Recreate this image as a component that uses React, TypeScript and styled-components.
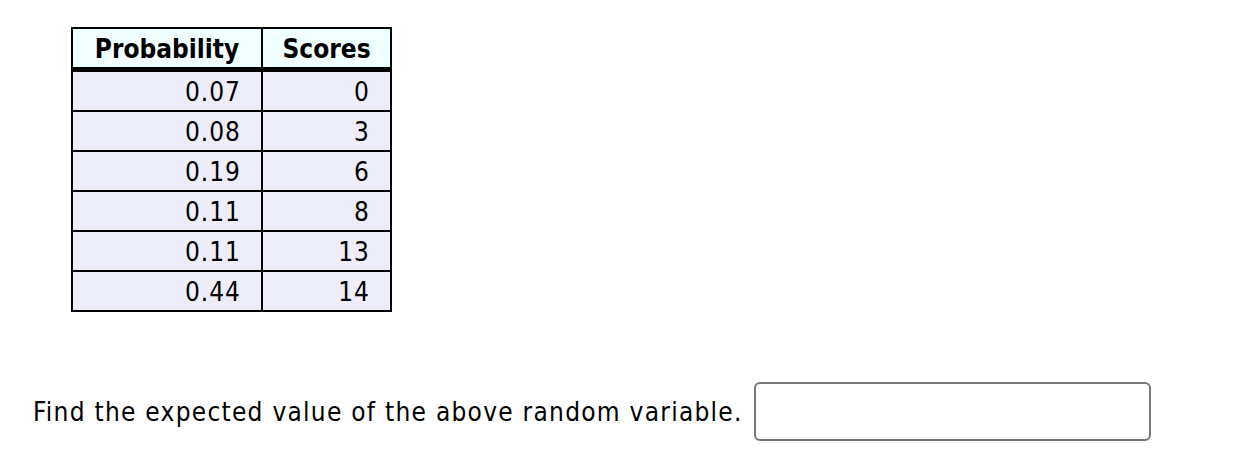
import React from "react";
import styled, { createGlobalStyle } from "styled-components";

interface Row {
  probability: string;
  score: number;
}

const rows: Row[] = [
  { probability: "0.07", score: 0 },
  { probability: "0.08", score: 3 },
  { probability: "0.19", score: 6 },
  { probability: "0.11", score: 8 },
  { probability: "0.11", score: 13 },
  { probability: "0.44", score: 14 },
];

const App: React.FC = () => {
  return (
    <>
      <GlobalStyle />
      <Page>
        <Table>
          <thead>
            <tr>
              <HeadCell $width={188}>Probability</HeadCell>
              <HeadCell $width={127}>Scores</HeadCell>
            </tr>
          </thead>
          <tbody>
            {rows.map((row, i) => (
              <tr key={i}>
                <Cell>{row.probability}</Cell>
                <Cell>{row.score}</Cell>
              </tr>
            ))}
          </tbody>
        </Table>
        <Question>
          <Prompt>Find the expected value of the above random variable.</Prompt>
          <Answer type="text" aria-label="expected value" />
        </Question>
      </Page>
    </>
  );
};

const GlobalStyle = createGlobalStyle`
  body {
    margin: 0;
    background: #fff;
    font-family: "DejaVu Sans Condensed", "DejaVu Sans", "Liberation Sans", sans-serif;
    font-stretch: condensed;
    color: #000;
  }
`;

const Page = styled.div`
  display: flex;
  flex-direction: column;
  align-items: flex-start;
  padding: 27px 0 0 33px;
`;

const Table = styled.table`
  margin-left: 38px;
  border-collapse: collapse;
  border: 2px solid #000;
  font-size: 26px;
`;

const HeadCell = styled.th<{ $width: number }>`
  width: ${(p) => p.$width}px;
  height: 37px;
  padding: 1px 0 0;
  background: #f0ffff;
  border: 2px solid #000;
  border-bottom: 5px solid #000;
  font-weight: bold;
  text-align: center;
  white-space: nowrap;
`;

const Cell = styled.td`
  height: 35px;
  padding: 3px 20px 0;
  background: #eeeefb;
  border: 2px solid #000;
  text-align: right;
  line-height: 35px;
  letter-spacing: 1px;
`;

const Question = styled.div`
  display: flex;
  align-items: center;
  gap: 11px;
  margin-top: 70px;
`;

const Prompt = styled.span`
  font-size: 26px;
  letter-spacing: 1.26px;
`;

const Answer = styled.input`
  box-sizing: border-box;
  width: 397px;
  height: 59px;
  border: 2px solid #777;
  border-radius: 6px;
  background: #fff;
  outline: none;
  font-size: 24px;
  padding: 0 10px;
`;

export default App;
